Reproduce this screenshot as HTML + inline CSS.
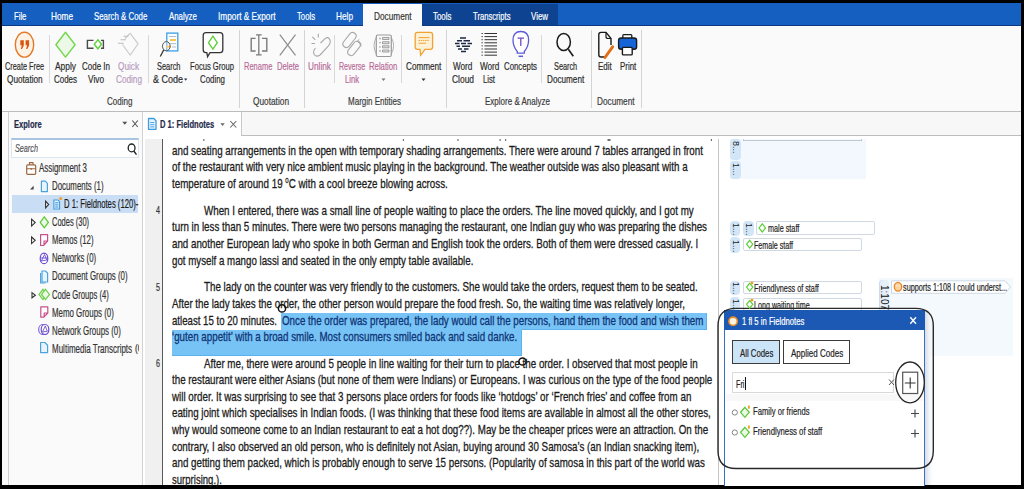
<!DOCTYPE html>
<html><head><meta charset="utf-8"><style>
html,body{margin:0;padding:0;}
body{width:1024px;height:489px;background:#000;position:relative;overflow:hidden;font-family:"Liberation Sans",sans-serif;}
.t{position:absolute;white-space:nowrap;line-height:normal;transform-origin:0 0;-webkit-text-stroke-width:0.2px;}
svg{position:absolute;overflow:visible;}
</style></head><body>
<div style="position:absolute;left:2px;top:3px;width:1019px;height:482px;background:#fafafa;"></div>
<div style="position:absolute;left:2px;top:3px;width:1019px;height:23px;background:#155fc0;"></div>
<div style="position:absolute;left:422px;top:4px;width:136px;height:22px;background:#0e4392;"></div>
<div style="position:absolute;left:363px;top:4px;width:59px;height:23px;background:#fafafa;"></div>
<div style="position:absolute;left:2px;top:25px;width:1019px;height:1px;background:#0c3a82;"></div>
<div style="position:absolute;left:363px;top:25px;width:59px;height:2px;background:#fafafa;"></div>
<div class="t" style="left: 14px; top: 9.5px; font-size: 11px; color: rgb(255, 255, 255); transform: scaleX(0.6992);">File</div>
<div class="t" style="left: 51px; top: 9.5px; font-size: 11px; color: rgb(255, 255, 255); transform: scaleX(0.7497);">Home</div>
<div class="t" style="left: 94px; top: 9.5px; font-size: 11px; color: rgb(255, 255, 255); transform: scaleX(0.7144);">Search &amp; Code</div>
<div class="t" style="left: 168.5px; top: 9.5px; font-size: 11px; color: rgb(255, 255, 255); transform: scaleX(0.7128);">Analyze</div>
<div class="t" style="left: 217.5px; top: 9.5px; font-size: 11px; color: rgb(255, 255, 255); transform: scaleX(0.7524);">Import &amp; Export</div>
<div class="t" style="left: 296.5px; top: 9.5px; font-size: 11px; color: rgb(255, 255, 255); transform: scaleX(0.7007);">Tools</div>
<div class="t" style="left: 336px; top: 9.5px; font-size: 11px; color: rgb(255, 255, 255); transform: scaleX(0.7514);">Help</div>
<div class="t" style="left: 374px; top: 9.5px; font-size: 11px; color: rgb(51, 51, 51); transform: scaleX(0.7499);">Document</div>
<div class="t" style="left: 433px; top: 9.5px; font-size: 11px; color: rgb(255, 255, 255); transform: scaleX(0.7163);">Tools</div>
<div class="t" style="left: 472.5px; top: 9.5px; font-size: 11px; color: rgb(255, 255, 255); transform: scaleX(0.6944);">Transcripts</div>
<div class="t" style="left: 531px; top: 9.5px; font-size: 11px; color: rgb(255, 255, 255); transform: scaleX(0.7186);">View</div>
<div style="position:absolute;left:2px;top:26px;width:1019px;height:85px;background:#fafafa;"></div>
<div style="position:absolute;left:2px;top:111px;width:1019px;height:1px;background:#bcbcbc;"></div>
<div style="position:absolute;left:239px;top:30px;width:1px;height:78px;background:#d4d4d4;"></div>
<div style="position:absolute;left:303.5px;top:30px;width:1px;height:78px;background:#d4d4d4;"></div>
<div style="position:absolute;left:445.5px;top:30px;width:1px;height:78px;background:#d4d4d4;"></div>
<div style="position:absolute;left:590.5px;top:30px;width:1px;height:78px;background:#d4d4d4;"></div>
<div style="position:absolute;left:640.5px;top:30px;width:1px;height:78px;background:#d4d4d4;"></div>
<div style="position:absolute;left:48.5px;top:35px;width:1px;height:48px;background:#d8d8d8;"></div>
<div style="position:absolute;left:147.5px;top:35px;width:1px;height:48px;background:#d8d8d8;"></div>
<div style="position:absolute;left:334.3px;top:35px;width:1px;height:48px;background:#d8d8d8;"></div>
<div style="position:absolute;left:401.4px;top:35px;width:1px;height:48px;background:#d8d8d8;"></div>
<div style="position:absolute;left:541px;top:35px;width:1px;height:48px;background:#d8d8d8;"></div>
<div class="t" style="left: 5px; top: 60px; font-size: 11px; color: rgb(43, 43, 43); transform: scaleX(0.6661);">Create Free</div>
<div class="t" style="left: 7px; top: 73px; font-size: 11px; color: rgb(43, 43, 43); transform: scaleX(0.7484);">Quotation</div>
<div class="t" style="left: 55px; top: 60px; font-size: 11px; color: rgb(43, 43, 43); transform: scaleX(0.7628);">Apply</div>
<div class="t" style="left: 54px; top: 73px; font-size: 11px; color: rgb(43, 43, 43); transform: scaleX(0.7233);">Codes</div>
<div class="t" style="left: 82px; top: 60px; font-size: 11px; color: rgb(43, 43, 43); transform: scaleX(0.7267);">Code In</div>
<div class="t" style="left: 88px; top: 73px; font-size: 11px; color: rgb(43, 43, 43); transform: scaleX(0.7546);">Vivo</div>
<div class="t" style="left: 118px; top: 60px; font-size: 11px; color: rgb(184, 154, 192); transform: scaleX(0.7467);">Quick</div>
<div class="t" style="left: 116px; top: 73px; font-size: 11px; color: rgb(184, 154, 192); transform: scaleX(0.7459);">Coding</div>
<div class="t" style="left: 156.5px; top: 60px; font-size: 11px; color: rgb(43, 43, 43); transform: scaleX(0.6741);">Search</div>
<div class="t" style="left: 153px; top: 73px; font-size: 11px; color: rgb(43, 43, 43); transform: scaleX(0.8174);">&amp; Code</div>
<div class="t" style="left: 190px; top: 60px; font-size: 11px; color: rgb(43, 43, 43); transform: scaleX(0.6919);">Focus Group</div>
<div class="t" style="left: 200px; top: 73px; font-size: 11px; color: rgb(43, 43, 43); transform: scaleX(0.7172);">Coding</div>
<div class="t" style="left: 106.6px; top: 94.5px; font-size: 11px; color: rgb(58, 58, 58); transform: scaleX(0.7286);">Coding</div>
<div class="t" style="left: 244.4px; top: 60px; font-size: 11px; color: rgb(184, 106, 152); transform: scaleX(0.6831);">Rename</div>
<div class="t" style="left: 277px; top: 60px; font-size: 11px; color: rgb(184, 106, 152); transform: scaleX(0.6919);">Delete</div>
<div class="t" style="left: 252.5px; top: 94.5px; font-size: 11px; color: rgb(58, 58, 58); transform: scaleX(0.7547);">Quotation</div>
<div class="t" style="left: 308px; top: 60px; font-size: 11px; color: rgb(184, 106, 152); transform: scaleX(0.7522);">Unlink</div>
<div class="t" style="left: 338.8px; top: 60px; font-size: 11px; color: rgb(184, 106, 152); transform: scaleX(0.6395);">Reverse</div>
<div class="t" style="left: 344.5px; top: 73px; font-size: 11px; color: rgb(184, 106, 152); transform: scaleX(0.6935);">Link</div>
<div class="t" style="left: 369.4px; top: 60px; font-size: 11px; color: rgb(184, 106, 152); transform: scaleX(0.7037);">Relation</div>
<div class="t" style="left: 405.9px; top: 60px; font-size: 11px; color: rgb(43, 43, 43); transform: scaleX(0.7423);">Comment</div>
<div class="t" style="left: 348px; top: 94.5px; font-size: 11px; color: rgb(58, 58, 58); transform: scaleX(0.7284);">Margin Entities</div>
<div class="t" style="left: 453px; top: 60px; font-size: 11px; color: rgb(43, 43, 43); transform: scaleX(0.7435);">Word</div>
<div class="t" style="left: 452px; top: 73px; font-size: 11px; color: rgb(43, 43, 43); transform: scaleX(0.7652);">Cloud</div>
<div class="t" style="left: 480px; top: 60px; font-size: 11px; color: rgb(43, 43, 43); transform: scaleX(0.7435);">Word</div>
<div class="t" style="left: 483px; top: 73px; font-size: 11px; color: rgb(43, 43, 43); transform: scaleX(0.7007);">List</div>
<div class="t" style="left: 504px; top: 60px; font-size: 11px; color: rgb(43, 43, 43); transform: scaleX(0.7099);">Concepts</div>
<div class="t" style="left: 553.8px; top: 60px; font-size: 11px; color: rgb(43, 43, 43); transform: scaleX(0.6655);">Search</div>
<div class="t" style="left: 546.7px; top: 73px; font-size: 11px; color: rgb(43, 43, 43); transform: scaleX(0.7419);">Document</div>
<div class="t" style="left: 485px; top: 94.5px; font-size: 11px; color: rgb(58, 58, 58); transform: scaleX(0.728);">Explore &amp; Analyze</div>
<div class="t" style="left: 597.6px; top: 60px; font-size: 11px; color: rgb(43, 43, 43); transform: scaleX(0.7275);">Edit</div>
<div class="t" style="left: 619.5px; top: 60px; font-size: 11px; color: rgb(43, 43, 43); transform: scaleX(0.716);">Print</div>
<div class="t" style="left: 596.5px; top: 94.5px; font-size: 11px; color: rgb(58, 58, 58); transform: scaleX(0.7479);">Document</div>
<div style="position:absolute;left:8px;top:112px;width:134px;height:373px;background:#fafafa;border-left:1px solid #d0d0d0;box-sizing:border-box;"></div>
<div class="t" style="left: 14px; top: 118.3px; font-size: 11px; color: rgb(30, 42, 74); font-weight: 700; transform: scaleX(0.6863);">Explore</div>
<div style="position:absolute;left:11px;top:138px;width:128px;height:19.5px;background:#fff;border:1px solid #dce6f0;border-top:2px solid #a9c4e0;box-sizing:border-box;"></div>
<div class="t" style="left: 14.5px; top: 141.6px; font-size: 11px; color: rgb(85, 85, 85); font-style: italic; transform: scaleX(0.6569);">Search</div>
<div style="position:absolute;left:12px;top:195px;width:126px;height:18px;background:#c9def5;"></div>
<div class="t" style="left: 39.3px; top: 161.1px; font-size: 12px; color: rgb(51, 51, 51); transform: scaleX(0.6602);">Assignment 3</div>
<div class="t" style="left: 52.2px; top: 179px; font-size: 12px; color: rgb(51, 51, 51); transform: scaleX(0.6556);">Documents (1)</div>
<div class="t" style="left: 64.4px; top: 196.9px; font-size: 12px; color: rgb(26, 26, 26); transform: scaleX(0.641);">D 1: Fieldnotes (120)-</div>
<div class="t" style="left: 52.2px; top: 215.1px; font-size: 12px; color: rgb(51, 51, 51); transform: scaleX(0.6248);">Codes (30)</div>
<div class="t" style="left: 52.2px; top: 233.1px; font-size: 12px; color: rgb(51, 51, 51); transform: scaleX(0.6483);">Memos (12)</div>
<div class="t" style="left: 52.2px; top: 251.1px; font-size: 12px; color: rgb(51, 51, 51); transform: scaleX(0.6484);">Networks (0)</div>
<div class="t" style="left: 52.2px; top: 269.1px; font-size: 12px; color: rgb(51, 51, 51); transform: scaleX(0.6543);">Document Groups (0)</div>
<div class="t" style="left: 52.2px; top: 287.6px; font-size: 12px; color: rgb(51, 51, 51); transform: scaleX(0.6355);">Code Groups (4)</div>
<div class="t" style="left: 52.2px; top: 305.6px; font-size: 12px; color: rgb(51, 51, 51); transform: scaleX(0.6572);">Memo Groups (0)</div>
<div class="t" style="left: 52.2px; top: 323.6px; font-size: 12px; color: rgb(51, 51, 51); transform: scaleX(0.6571);">Network Groups (0)</div>
<div class="t" style="left: 52.2px; top: 341.6px; font-size: 12px; color: rgb(51, 51, 51); transform: scaleX(0.6672);">Multimedia Transcripts</div>
<div style="position:absolute;left:134px;top:340px;width:5px;height:16px;overflow:hidden"><div class="t" style="left:0.5px;top:2px;font-size:11px;color:#2b2b2b;transform:scaleX(0.75)">(0)</div></div>
<div style="position:absolute;left:141.5px;top:112px;width:1.2px;height:373px;background:#d2d2d2;"></div>
<div style="position:absolute;left:143px;top:112px;width:878px;height:24px;background:#f7f7f7;"></div>
<div style="position:absolute;left:143px;top:135px;width:878px;height:1px;background:#bdbdbd;"></div>
<div style="position:absolute;left:143px;top:112px;width:99px;height:24px;background:#fff;"></div>
<div style="position:absolute;left:241px;top:112px;width:1px;height:24px;background:#c8c8c8;"></div>
<div class="t" style="left: 160.3px; top: 117.6px; font-size: 11px; color: rgb(30, 42, 74); font-weight: 700; transform: scaleX(0.6887);">D 1: Fieldnotes</div>
<div style="position:absolute;left:143px;top:136px;width:878px;height:349px;background:#fff;"></div>
<div style="position:absolute;left:145px;top:139px;width:17.5px;height:346px;background:#f0f0f0;"></div>
<div style="position:absolute;left:162px;top:139px;width:1.2px;height:346px;background:#5a5a5a;"></div>
<div class="t" style="left: 156.2px; top: 204.5px; font-size: 10px; color: rgb(51, 51, 51); transform: scaleX(0.7191);">4</div>
<div class="t" style="left: 156.2px; top: 281.5px; font-size: 10px; color: rgb(51, 51, 51); transform: scaleX(0.7191);">5</div>
<div class="t" style="left: 156.2px; top: 358px; font-size: 10px; color: rgb(51, 51, 51); transform: scaleX(0.7191);">6</div>
<div style="position:absolute;left:717.5px;top:139px;width:1.5px;height:346px;background:#c4c4c4;"></div>
<div style="position:absolute;left:281.2px;top:313.3px;width:426px;height:16.5px;background:#78c3f5;"></div>
<div style="position:absolute;left:172px;top:329.5px;width:350px;height:26.3px;background:#78c3f5;box-shadow:inset 0 -1px 0 #5ab2ee, inset -1px 0 0 #5ab2ee;"></div>
<div style="position:absolute;left:522px;top:313.3px;width:185.2px;height:16.5px;box-shadow:inset 0 -1px 0 #5ab2ee, inset -1px 0 0 #5ab2ee;"></div>
<div class="t" style="left: 172.2px; top: 142.8px; font-size: 13px; color: rgb(28, 28, 28); -webkit-text-stroke: 0.3px rgb(28, 28, 28); transform: scaleX(0.7523);">and seating arrangements in the open with temporary shading arrangements. There were around 7 tables arranged in front</div>
<div class="t" style="left: 172.2px; top: 159.4px; font-size: 13px; color: rgb(28, 28, 28); -webkit-text-stroke: 0.3px rgb(28, 28, 28); transform: scaleX(0.7521);">of the restaurant with very nice ambient music playing in the background. The weather outside was also pleasant with a</div>
<div class="t" style="left: 172.2px; top: 176px; font-size: 13px; color: rgb(28, 28, 28); -webkit-text-stroke: 0.3px rgb(28, 28, 28); transform: scaleX(0.754);">temperature of around 19 <sup style="font-size:8px;vertical-align:5px">0</sup>C with a cool breeze blowing across.</div>
<div class="t" style="left: 204.3px; top: 202.6px; font-size: 13px; color: rgb(28, 28, 28); -webkit-text-stroke: 0.3px rgb(28, 28, 28); transform: scaleX(0.7527);">When I entered, there was a small line of people waiting to place the orders. The line moved quickly, and I got my</div>
<div class="t" style="left: 172.2px; top: 219.3px; font-size: 13px; color: rgb(28, 28, 28); -webkit-text-stroke: 0.3px rgb(28, 28, 28); transform: scaleX(0.7526);">turn in less than 5 minutes. There were two persons managing the restaurant, one Indian guy who was preparing the dishes</div>
<div class="t" style="left: 172.2px; top: 236px; font-size: 13px; color: rgb(28, 28, 28); -webkit-text-stroke: 0.3px rgb(28, 28, 28); transform: scaleX(0.7511);">and another European lady who spoke in both German and English took the orders. Both of them were dressed casually. I</div>
<div class="t" style="left: 172.2px; top: 252.6px; font-size: 13px; color: rgb(28, 28, 28); -webkit-text-stroke: 0.3px rgb(28, 28, 28); transform: scaleX(0.7474);">got myself a mango lassi and seated in the only empty table available.</div>
<div class="t" style="left: 204.3px; top: 279.4px; font-size: 13px; color: rgb(28, 28, 28); -webkit-text-stroke: 0.3px rgb(28, 28, 28); transform: scaleX(0.7516);">The lady on the counter was very friendly to the customers. She would take the orders, request them to be seated.</div>
<div class="t" style="left: 172.2px; top: 296px; font-size: 13px; color: rgb(28, 28, 28); -webkit-text-stroke: 0.3px rgb(28, 28, 28); transform: scaleX(0.752);">After the lady takes the order, the other person would prepare the food fresh. So, the waiting time was relatively longer,</div>
<div class="t" style="left: 172.2px; top: 312.5px; font-size: 13px; color: rgb(28, 28, 28); -webkit-text-stroke: 0.3px rgb(28, 28, 28); transform: scaleX(0.7412);">atleast 15 to 20 minutes.</div>
<div class="t" style="left: 204.3px; top: 355.6px; font-size: 13px; color: rgb(28, 28, 28); -webkit-text-stroke: 0.3px rgb(28, 28, 28); transform: scaleX(0.7524);">After me, there were around 5 people in line waiting for their turn to place the order. I observed that most people in</div>
<div class="t" style="left: 172.2px; top: 372.2px; font-size: 13px; color: rgb(28, 28, 28); -webkit-text-stroke: 0.3px rgb(28, 28, 28); transform: scaleX(0.7529);">the restaurant were either Asians (but none of them were Indians) or Europeans. I was curious on the type of the food people</div>
<div class="t" style="left: 172.2px; top: 388.8px; font-size: 13px; color: rgb(28, 28, 28); -webkit-text-stroke: 0.3px rgb(28, 28, 28); transform: scaleX(0.7531);">will order. It was surprising to see that 3 persons place orders for foods like ‘hotdogs’ or ‘French fries’ and coffee from an</div>
<div class="t" style="left: 172.2px; top: 405.4px; font-size: 13px; color: rgb(28, 28, 28); -webkit-text-stroke: 0.3px rgb(28, 28, 28); transform: scaleX(0.7516);">eating joint which specialises in Indian foods. (I was thinking that these food items are available in almost all the other stores,</div>
<div class="t" style="left: 172.2px; top: 422px; font-size: 13px; color: rgb(28, 28, 28); -webkit-text-stroke: 0.3px rgb(28, 28, 28); transform: scaleX(0.7516);">why would someone come to an Indian restaurant to eat a hot dog??). May be the cheaper prices were an attraction. On the</div>
<div class="t" style="left: 172.2px; top: 438.6px; font-size: 13px; color: rgb(28, 28, 28); -webkit-text-stroke: 0.3px rgb(28, 28, 28); transform: scaleX(0.7525);">contrary, I also observed an old person, who is definitely not Asian, buying around 30 Samosa’s (an Indian snacking item),</div>
<div class="t" style="left: 172.2px; top: 455.2px; font-size: 13px; color: rgb(28, 28, 28); -webkit-text-stroke: 0.3px rgb(28, 28, 28); transform: scaleX(0.7524);">and getting them packed, which is probably enough to serve 15 persons. (Popularity of samosa in this part of the world was</div>
<div class="t" style="left: 172.2px; top: 471.8px; font-size: 13px; color: rgb(28, 28, 28); -webkit-text-stroke: 0.3px rgb(28, 28, 28); transform: scaleX(0.7347);">surprising.).</div>
<div class="t" style="left: 281.6px; top: 312.5px; font-size: 13px; color: rgb(15, 53, 117); -webkit-text-stroke: 0.3px rgb(15, 53, 117); transform: scaleX(0.7515);">Once the order was prepared, the lady would call the persons, hand them the food and wish them</div>
<div class="t" style="left: 172.2px; top: 329.1px; font-size: 13px; color: rgb(15, 53, 117); -webkit-text-stroke: 0.3px rgb(15, 53, 117); transform: scaleX(0.7519);">‘guten appetit’ with a broad smile. Most consumers smiled back and said danke.</div>
<svg style="left:0;top:0" width="1024" height="489"><circle cx="282" cy="308.4" r="3.6" fill="none" stroke="#111" stroke-width="1.5"></circle><circle cx="522.5" cy="361.5" r="3.6" fill="none" stroke="#111" stroke-width="1.5"></circle></svg>
<div style="position:absolute;left:730px;top:139px;width:136px;height:39.7px;background:#f2f8fd;"></div>
<div style="position:absolute;left:743.4px;top:139px;width:119px;height:2.2px;border:1px solid #c0c8d0;border-top:none;box-sizing:border-box;"></div>
<div style="position:absolute;left:730px;top:139px;width:11px;height:21px;background:#d2e6f8;border-radius:4px;"></div>
<div style="position:absolute;left:730px;top:161.3px;width:11px;height:17.4px;background:#d2e6f8;border-radius:4px;"></div>
<div style="position:absolute;left:740px;top:141px;transform:rotate(90deg);transform-origin:0 0;font-size:9px;line-height:9px;color:#1a1a1a;white-space:nowrap;">8...</div>
<div style="position:absolute;left:740px;top:163px;transform:rotate(90deg);transform-origin:0 0;font-size:9px;line-height:9px;color:#1a1a1a;white-space:nowrap;">1...</div>
<div style="position:absolute;left:730.2px;top:220.5px;width:10.2px;height:15.5px;background:#d2e6f8;border-radius:4px;"></div>
<div style="position:absolute;left:743.4px;top:220.5px;width:10.2px;height:15.5px;background:#d2e6f8;border-radius:4px;"></div>
<div style="position:absolute;left:740px;top:223px;transform:rotate(90deg);transform-origin:0 0;font-size:9px;line-height:9px;color:#1a1a1a;white-space:nowrap;">1...</div>
<div style="position:absolute;left:753px;top:223px;transform:rotate(90deg);transform-origin:0 0;font-size:9px;line-height:9px;color:#1a1a1a;white-space:nowrap;">1...</div>
<div style="position:absolute;left:756.3px;top:220.5px;width:119.2px;height:14px;background:#fff;border:1px solid #cfd9e4;border-radius:2px;box-sizing:border-box;"></div>
<div class="t" style="left: 767.7px; top: 222px; font-size: 11px; color: rgb(34, 34, 34); transform: scaleX(0.6589);">male staff</div>
<div style="position:absolute;left:730.2px;top:237px;width:10.2px;height:16px;background:#d2e6f8;border-radius:4px;"></div>
<div style="position:absolute;left:740px;top:239.5px;transform:rotate(90deg);transform-origin:0 0;font-size:9px;line-height:9px;color:#1a1a1a;white-space:nowrap;">1...</div>
<div style="position:absolute;left:743.4px;top:237.6px;width:119.1px;height:13px;background:#fff;border:1px solid #cfd9e4;border-radius:2px;box-sizing:border-box;"></div>
<div class="t" style="left: 754.4px; top: 238.6px; font-size: 11px; color: rgb(34, 34, 34); transform: scaleX(0.6465);">Female staff</div>
<div style="position:absolute;left:730.2px;top:280.5px;width:10.2px;height:14.8px;background:#d2e6f8;border-radius:4px;"></div>
<div style="position:absolute;left:740px;top:282px;transform:rotate(90deg);transform-origin:0 0;font-size:9px;line-height:9px;color:#1a1a1a;white-space:nowrap;">1...</div>
<div style="position:absolute;left:743.4px;top:280.5px;width:119.1px;height:13.3px;background:#fff;border:1px solid #cfd9e4;border-radius:2px;box-sizing:border-box;"></div>
<div class="t" style="left: 754.4px; top: 281.6px; font-size: 11px; color: rgb(34, 34, 34); transform: scaleX(0.6596);">Friendlyness of staff</div>
<div style="position:absolute;left:730.2px;top:297px;width:10.2px;height:14px;background:#d2e6f8;border-radius:4px;"></div>
<div style="position:absolute;left:740px;top:299px;transform:rotate(90deg);transform-origin:0 0;font-size:9px;line-height:9px;color:#1a1a1a;white-space:nowrap;">1...</div>
<div style="position:absolute;left:743.4px;top:297.7px;width:119.1px;height:13.3px;background:#fff;border:1px solid #cfd9e4;border-radius:2px;box-sizing:border-box;"></div>
<div class="t" style="left: 754.4px; top: 298.6px; font-size: 11px; color: rgb(34, 34, 34); transform: scaleX(0.6495);">Long waiting time</div>
<div style="position:absolute;left:879.2px;top:278px;width:134.3px;height:78px;background:#f4f9fd;"></div>
<div style="position:absolute;left:879.2px;top:279.8px;width:9.6px;height:32px;background:#e4effa;border-radius:4px;box-shadow:inset 1px 0 0 #c5dcf2;"></div>
<div style="position:absolute;left:889px;top:284.5px;transform:rotate(90deg);transform-origin:0 0;font-size:10px;line-height:10px;color:#111;white-space:nowrap;">1:107</div>
<svg style="left:0;top:0" width="1024" height="489"><path d="M891.5 280.8 H1005 L1010.5 287 L1005 293.3 H891.5 Z" fill="#fff" stroke="#cfd9e4" stroke-width="1"></path></svg>
<div class="t" style="left: 903px; top: 280.8px; font-size: 11px; color: rgb(34, 34, 34); transform: scaleX(0.6618);">supports 1:108 I could underst...</div>
<div style="position:absolute;left:724.4px;top:309.5px;width:201px;height:176px;background:#fff;border-left:1px solid #3a6fc0;border-right:1px solid #3a6fc0;box-sizing:border-box;"></div>
<div style="position:absolute;left:925.4px;top:311px;width:8px;height:174px;background:linear-gradient(90deg,#d8dde6,#f4f6f9 60%,rgba(255,255,255,0));"></div>
<div style="position:absolute;left:724.4px;top:309.5px;width:201px;height:20.5px;background:#1c59b4;"></div>
<svg style="left:0;top:0" width="1024" height="489"><circle cx="733.1" cy="321.3" r="4.2" fill="#fff3e0" stroke="#e8892a" stroke-width="1.6"></circle><path d="M910.3 317.3 L916 323.8 M916 317.3 L910.3 323.8" stroke="#fff" stroke-width="1.4"></path></svg>
<div class="t" style="left: 741.7px; top: 314.5px; font-size: 11px; color: rgb(255, 255, 255); transform: scaleX(0.6978);">1 fl 5 in Fieldnotes</div>
<div style="position:absolute;left:731.8px;top:340.3px;width:48.5px;height:24.1px;background:#cce4f7;border:1px solid #3c3c3c;box-sizing:border-box;"></div>
<div class="t" style="left: 740px; top: 347px; font-size: 11px; color: rgb(34, 34, 34); transform: scaleX(0.7073);">All Codes</div>
<div style="position:absolute;left:783.1px;top:340.3px;width:66.8px;height:24.1px;background:#fff;border:1px solid #3c3c3c;box-sizing:border-box;"></div>
<div class="t" style="left: 790.9px; top: 347px; font-size: 11px; color: rgb(34, 34, 34); transform: scaleX(0.7294);">Applied Codes</div>
<div style="position:absolute;left:726px;top:393.5px;width:198px;height:7px;background:#f8f8f8;"></div>
<div style="position:absolute;left:732px;top:371.7px;width:162px;height:21.5px;background:#fff;border:1px solid #d9d9d9;box-sizing:border-box;"></div>
<div class="t" style="left: 735.6px; top: 378px; font-size: 11px; color: rgb(34, 34, 34); transform: scaleX(0.6548);">Fri</div>
<div style="position:absolute;left:745px;top:377px;width:1px;height:13px;background:#111;"></div>
<svg style="left:0;top:0" width="1024" height="489"><path d="M889 379.5 L894 385 M894 379.5 L889 385" stroke="#555" stroke-width="1"></path><rect x="902.7" y="372.2" width="15" height="21.3" fill="#fff" stroke="#555" stroke-width="1.2"></rect><path d="M910.2 377.5 V388.5 M904.8 383 H915.6" stroke="#333" stroke-width="1.1"></path><ellipse cx="910" cy="382.4" rx="14.3" ry="20.4" fill="none" stroke="#262626" stroke-width="1.3"></ellipse><path d="M911 413.5 H919 M915 409.5 V417.5 M911 433.5 H919 M915 429.5 V437.5" stroke="#444" stroke-width="1.1"></path><circle cx="734.8" cy="412.5" r="2.6" fill="#fff" stroke="#777" stroke-width="0.9"></circle><circle cx="734.8" cy="432.5" r="2.6" fill="#fff" stroke="#777" stroke-width="0.9"></circle><path d="M744.9 407.3 L749.2 412.3 L744.9 417.3 L740.6 412.3 Z" fill="#eaf8e6" stroke="#5cc83c" stroke-width="1.3"></path><path d="M744.9 427.3 L749.2 432.3 L744.9 437.3 L740.6 432.3 Z" fill="#eaf8e6" stroke="#5cc83c" stroke-width="1.3"></path><rect x="748" y="405.5" width="1.8" height="3.2" fill="#f0a020"></rect><rect x="748" y="425.5" width="1.8" height="3.2" fill="#f0a020"></rect><path d="M736 308.4 H915.5 Q933.3 308.4 933.3 326 V450.5 Q933.3 468.5 915.5 468.5 H736 Q718 468.5 718 450.5 V326 Q718 308.4 736 308.4 Z" fill="none" stroke="#2a2a2a" stroke-width="1.4"></path></svg>
<div class="t" style="left: 753.3px; top: 405.2px; font-size: 11px; color: rgb(34, 34, 34); transform: scaleX(0.695);">Family or friends</div>
<div class="t" style="left: 753.3px; top: 425.2px; font-size: 11px; color: rgb(34, 34, 34); transform: scaleX(0.7044);">Friendlyness of staff</div>
<svg style="left:0;top:0" width="1024" height="489"><ellipse cx="24.5" cy="44.7" rx="9.2" ry="12.4" fill="#fdf2e6" stroke="#e27a2c" stroke-width="1.4"></ellipse><path d="M20.3 40.3 H23.8 V45.5 L22 49 H20.8 L21.8 45.2 H20.3 Z M25.6 40.3 H29.1 V45.5 L27.3 49 H26.1 L27.1 45.2 H25.6 Z" fill="#d9560e"></path><path d="M65.5 32.3 L75.1 44.7 L65.5 57.1 L55.9 44.7 Z" fill="#ecf9e6" stroke="#74d652" stroke-width="1.4" stroke-linejoin="round"></path><path d="M93.5 40.4 H87.4 V48.3 H93.5 M101 40.4 H103.4 V48.3 H101" fill="none" stroke="#4a4a4a" stroke-width="1.4"></path><path d="M97.9 39.8 L101.5 44.3 L97.9 48.8 L94.3 44.3 Z" fill="#fff" stroke="#5fd23a" stroke-width="1.4"></path><path d="M125 38.5 L130.2 33.4 L138.1 43.8 L130.2 55 L122.5 44.5" fill="none" stroke="#c9c9c9" stroke-width="1.1"></path><path d="M123.5 36.2 H128.5 M120.5 39.7 H126 M118 43.2 H123.8" stroke="#bdbdbd" stroke-width="1.1"></path><rect x="166.8" y="33.1" width="11" height="17.8" fill="#fff" stroke="#3a9fe6" stroke-width="1.3"></rect><path d="M169 36.5 H176 M169 43.7 H176 M172 47 H176" stroke="#9ab" stroke-width="0.8"></path><path d="M170 40 H176" stroke="#f5b820" stroke-width="1.6"></path><path d="M166 46.6 H171" stroke="#f5b820" stroke-width="1.8"></path><ellipse cx="166.3" cy="46.2" rx="3.8" ry="4.6" fill="rgba(255,255,255,0.3)" stroke="#555" stroke-width="1"></ellipse><path d="M163.8 49.8 L160.3 56.5" stroke="#333" stroke-width="1.3"></path><path d="M206 32.6 H220 Q222.8 32.6 222.8 35.5 V49.7 Q222.8 52.6 220 52.6 H210 L207.6 56.6 L206.8 52.6 H206 Q203.2 52.6 203.2 49.7 V35.5 Q203.2 32.6 206 32.6 Z" fill="#fff" stroke="#333" stroke-width="1.3"></path><path d="M212.9 36.2 L217.3 42.7 L212.9 49.2 L208.5 42.7 Z" fill="#fff" stroke="#55d030" stroke-width="1.3"></path><path d="M255.6 38.4 H251.2 V51 H255.6 M262 38.4 H266.8 V51 H262" fill="none" stroke="#7a7a7a" stroke-width="1.4"></path><path d="M258.8 34.8 V54.8 M256 34.8 H261.6 M256 54.8 H261.6" stroke="#7a7a7a" stroke-width="1.3"></path><path d="M279.8 34.6 L295.5 55.3 M295.5 34.6 L279.8 55.3" stroke="#8c8c8c" stroke-width="1.2"></path><path d="M320.5 43 L325 38.6 Q328.5 36 330 40 Q331 43 328 46.5 L320 55 Q316.5 57.5 314.2 54.5 Q312.5 51.5 315.5 48" fill="none" stroke="#a8a8a8" stroke-width="1.1"></path><path d="M318.3 33.8 V37.5 M312.3 36.8 L315.3 39.8 M311.5 43.5 H315" stroke="#a8a8a8" stroke-width="1.1"></path><rect x="341" y="36.5" width="17" height="7" rx="3.5" transform="rotate(-52 349.5 40)" fill="none" stroke="#a9a9a9" stroke-width="1.1"></rect><rect x="346" y="45" width="16" height="7" rx="3.5" transform="rotate(-52 354 48.5)" fill="none" stroke="#a9a9a9" stroke-width="1.1"></rect><path d="M357.3 41.2 Q361.8 41.5 360.8 46.5 M357.3 41.2 L359.3 39.4 M357.3 41.2 L359.5 43" fill="none" stroke="#a9a9a9" stroke-width="1"></path><path d="M376.5 37 Q371.5 45.5 376.5 54.5 M391 37 Q396.3 45.5 391 54.5" fill="none" stroke="#b0b0b0" stroke-width="1"></path><rect x="376.3" y="35" width="15" height="21.5" rx="1.5" fill="#fafafa" stroke="#9a9a9a" stroke-width="1.2"></rect><path d="M379.5 38.5 H380.5 M379.5 42.7 H380.5 M379.5 46.8 H380.5 M379.5 51 H380.5" stroke="#777" stroke-width="1.3"></path><path d="M382.5 37.5 H389 V39.5 H382.5 Z M382.5 41.7 H389 V43.7 H382.5 Z M382.5 45.8 H389 V47.8 H382.5 Z M382.5 50 H389 V52 H382.5 Z" fill="#e3e3e3" stroke="#8c8c8c" stroke-width="0.8"></path><path d="M381.5 78.5 H385.5 L383.5 81 Z" fill="#777"></path><path d="M417.5 32.3 H430.3 Q432.6 32.3 432.6 34.6 V47 Q432.6 49.3 430.3 49.3 H425 L420.6 55.3 L420 49.3 H417.5 Q415.2 49.3 415.2 47 V34.6 Q415.2 32.3 417.5 32.3 Z" fill="#fff1d6" stroke="#f0a330" stroke-width="1.3"></path><path d="M418.5 37.6 H429.5 M418.5 43.2 H426" stroke="#f0a030" stroke-width="1"></path><path d="M418.5 40.4 H429.5" stroke="#f0a030" stroke-width="1" stroke-dasharray="1.5 0.7"></path><path d="M421.5 78.5 H425.5 L423.5 81 Z" fill="#333"></path><g stroke="#1f2a44" stroke-width="1.4"><path d="M460 38 H466 M457 40.8 H462 M463.5 40.8 H470 M455 43.5 H459.5 M461 43.5 H466 M467.5 43.5 H472 M456.5 46.3 H460 M462 46.3 H470 M458 49 H462 M464 49 H468.5 M461 51.5 H466"></path></g><g stroke="#333" stroke-width="1"><path d="M484.5 33.5 H497 M484.5 36.6 H497 M484.5 39.7 H497 M484.5 42.8 H497 M484.5 45.9 H497 M484.5 49 H497 M484.5 52.1 H497 M484.5 55.2 H497"></path><path d="M481.5 33.5 H482.8 M481.5 36.6 H482.8 M481.5 39.7 H482.8 M481.5 42.8 H482.8 M481.5 45.9 H482.8 M481.5 49 H482.8 M481.5 52.1 H482.8 M481.5 55.2 H482.8"></path></g><path d="M517.3 51.5 Q513 46.5 513 40 Q513 31.5 520.8 31.5 Q528.6 31.5 528.6 40 Q528.6 46.5 524.3 51.5 V53.2 H517.3 Z" fill="#fff" stroke="#5a5ad8" stroke-width="1.3"></path><path d="M518.6 56.3 H523" stroke="#5a5ad8" stroke-width="1.5"></path><path d="M517.6 38.2 H524 M520.8 38.2 V46" stroke="#6a4ac8" stroke-width="1.3"></path><ellipse cx="563.7" cy="42" rx="6.7" ry="8.6" fill="none" stroke="#1a1a1a" stroke-width="1.5"></ellipse><path d="M568.3 49.3 L573.3 56.3" stroke="#1a1a1a" stroke-width="1.6"></path><path d="M605.5 57 H601 Q598.8 57 598.8 54.8 V34.6 Q598.8 32.4 601 32.4 H606 L611 38.5 V45" fill="none" stroke="#1a1a1a" stroke-width="1.4"></path><path d="M606 32.6 V36.5 Q606 38.5 608 38.5 H611" fill="none" stroke="#1a1a1a" stroke-width="1.2"></path><path d="M612.6 46.8 L605 57.5" stroke="#e06f18" stroke-width="3" stroke-linecap="round"></path><rect x="622.8" y="34.6" width="9" height="4" rx="1" fill="#fff" stroke="#1a1a1a" stroke-width="1.3"></rect><rect x="618.6" y="38" width="18" height="11.3" rx="2.5" fill="#1565d8" stroke="#1a1a1a" stroke-width="1.4"></rect><rect x="622.4" y="47.4" width="9.8" height="7.5" rx="1" fill="#fff" stroke="#1a1a1a" stroke-width="1.4"></rect><path d="M184 78.5 H187.4 L185.7 80.8 Z" fill="#333"></path></svg>
<svg style="left:0;top:0" width="1024" height="489"><path d="M122.3 121.8 H127.3 L124.8 124.8 Z" fill="#555"></path><path d="M132.3 120.5 L137.8 127 M137.8 120.5 L132.3 127" stroke="#555" stroke-width="1.1"></path><ellipse cx="131.6" cy="147.9" rx="3.4" ry="3.9" fill="none" stroke="#222" stroke-width="1.3"></ellipse><path d="M133.8 151 L136.5 154.6" stroke="#222" stroke-width="1.4"></path><path d="M29.5 164.8 V162.6 H33 V164.8" fill="none" stroke="#9a6640" stroke-width="1.1"></path><rect x="26.7" y="164.9" width="9" height="9.4" rx="1" fill="#fff" stroke="#9a6640" stroke-width="1.2"></rect><path d="M26.7 168.8 H35.7 M31.2 168 V170" stroke="#9a6640" stroke-width="1.1"></path><path d="M33.6 185.8 V189.6 H30 Z" fill="#444"></path><path d="M41.4 181.2 H45.3 L47.4 183.4 V191.6 H41.4 Z" fill="#eaf4fc" stroke="#4aa3df" stroke-width="1.2" stroke-linejoin="round"></path><path d="M45.6 201.2 L48.7 204.5 L45.6 207.8 Z" fill="#fff" stroke="#333" stroke-width="1.1"></path><path d="M53.9 200 H58 L59.6 201.7 V209 H53.9 Z" fill="#eaf4fc" stroke="#3a9be0" stroke-width="1.1"></path><path d="M55.2 202.8 H58.4 M55.2 204.9 H58.4 M55.2 207 H58.4" stroke="#2f8fd8" stroke-width="1"></path><circle cx="60.6" cy="198.4" r="1.5" fill="#f0a020"></circle><path d="M31.6 219.2 L35.2 222.6 L31.6 226 Z" fill="#fff" stroke="#333" stroke-width="1.1"></path><path d="M44.3 216.8 L48.4 222.3 L44.3 227.8 L40.2 222.3 Z" fill="#ebf9e6" stroke="#5dcc3a" stroke-width="1.3" stroke-linejoin="round"></path><path d="M31.6 237 L35.2 240.3 L31.6 243.6 Z" fill="#fff" stroke="#333" stroke-width="1.1"></path><path d="M40.6 234.6 H47.6 V241 L43.5 245.5 H40.6 Z M47.6 241 H44 V245.5" fill="#fff" stroke="#c8508a" stroke-width="1.2" stroke-linejoin="round"></path><ellipse cx="44" cy="258.4" rx="3.8" ry="5.3" fill="#fff" stroke="#6a4ccf" stroke-width="1.2"></ellipse><path d="M41.3 261 L44.5 254.5 L46.8 260 Z M41 258 H47" fill="none" stroke="#6a4ccf" stroke-width="0.9"></path><path d="M42 271 H45.5 L47.6 273 V282 H42 Z" fill="#eaf4fc" stroke="#4aa3df" stroke-width="1.2"></path><path d="M40.6 273 V283 H45.5" fill="none" stroke="#4aa3df" stroke-width="1.1"></path><path d="M32 292.6 L35.4 295.2 L32 297.8 Z" fill="#fff" stroke="#333" stroke-width="1.1"></path><path d="M43 289.3 L47 294.4 L43 299.6 L39 294.4 Z" fill="#ebf9e6" stroke="#6ad048" stroke-width="1.2"></path><path d="M45.5 289.3 L49.5 294.4 L45.5 299.6 L41.5 294.4 Z" fill="#ebf9e6" stroke="#6ad048" stroke-width="1.2"></path><path d="M40.8 306.8 H47.8 V313 L43.8 317.2 H40.8 Z M47.8 313 H44.2 V317.2" fill="#fff" stroke="#c8508a" stroke-width="1.2" stroke-linejoin="round"></path><ellipse cx="42.5" cy="329.5" rx="3.8" ry="5" fill="#fff" stroke="#7a5cd8" stroke-width="1.1"></ellipse><ellipse cx="45" cy="329.5" rx="3.8" ry="5" fill="#fff" stroke="#6a4ccf" stroke-width="1.2"></ellipse><path d="M42.5 332 L45.3 326 L47.3 331.3 Z" fill="none" stroke="#6a4ccf" stroke-width="0.9"></path><path d="M40.6 342.5 H44.8 L47.6 345.2 V352.6 H40.6 Z" fill="#eaf4fc" stroke="#4aa3df" stroke-width="1.2" stroke-linejoin="round"></path><path d="M148.5 118.5 H153.8 L156 120.7 V129.3 H148.5 Z" fill="#eaf4fc" stroke="#3a9be0" stroke-width="1.3" stroke-linejoin="round"></path><path d="M150.2 122.5 H154.3 M150.2 124.7 H154.3 M150.2 126.9 H154.3" stroke="#3a9be0" stroke-width="0.9"></path><path d="M220.4 123.2 H224.7 L222.5 126 Z" fill="#666"></path><path d="M230.3 121 L236.3 127.5 M236.3 121 L230.3 127.5" stroke="#666" stroke-width="1.1"></path><path d="M762.3 223.8 L765.6 227.9 L762.3 232 L759 227.9 Z" fill="#fff" stroke="#5cd03a" stroke-width="1.2"></path><path d="M749.7 240.3 L752.8 244.2 L749.7 248.1 L746.6 244.2 Z" fill="#fff" stroke="#5cd03a" stroke-width="1.2"></path><path d="M749.7 283.2 L752.8 287.1 L749.7 291 L746.6 287.1 Z" fill="#fff" stroke="#5cd03a" stroke-width="1.2"></path><path d="M749.7 300.4 L752.8 304.3 L749.7 308.2 L746.6 304.3 Z" fill="#fff" stroke="#5cd03a" stroke-width="1.2"></path><circle cx="752" cy="283" r="1.4" fill="#f0a020"></circle><circle cx="752" cy="300.2" r="1.4" fill="#f0a020"></circle><ellipse cx="898" cy="286.8" rx="3.7" ry="4.4" fill="#fbd3a0" stroke="#e8862a" stroke-width="1.3"></ellipse><circle cx="896.8" cy="285.8" r="0.6" fill="#fff"></circle><circle cx="899.2" cy="285.8" r="0.6" fill="#fff"></circle></svg>
<svg style="left:0;top:0" width="1024" height="489"><rect x="203.2" y="139.3" width="1.2" height="1.4" fill="#333"></rect><rect x="402.8" y="139.3" width="1.2" height="1.4" fill="#333"></rect><rect x="457.4" y="139.3" width="1.2" height="1.4" fill="#333"></rect><rect x="499.5" y="139.3" width="1.2" height="1.4" fill="#333"></rect><rect x="505" y="139.3" width="1.2" height="1.4" fill="#333"></rect><rect x="710.8" y="139.3" width="1.2" height="1.4" fill="#333"></rect><rect x="607.5" y="139.3" width="3" height="1.4" fill="#333"></rect></svg>
</body></html>
